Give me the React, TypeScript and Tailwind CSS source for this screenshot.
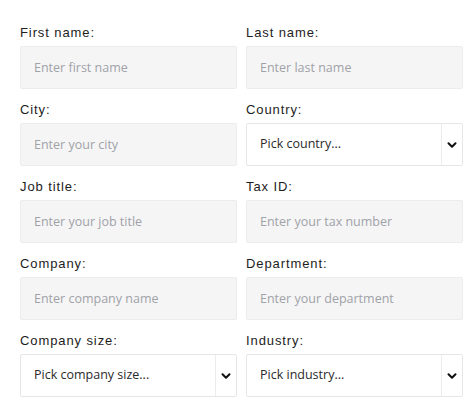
import { ChevronDown } from "lucide-react";

type Field = { label: string; placeholder: string; select?: boolean };

const fields: Field[] = [
  { label: "First name:", placeholder: "Enter first name" },
  { label: "Last name:", placeholder: "Enter last name" },
  { label: "City:", placeholder: "Enter your city" },
  { label: "Country:", placeholder: "Pick country...", select: true },
  { label: "Job title:", placeholder: "Enter your job title" },
  { label: "Tax ID:", placeholder: "Enter your tax number" },
  { label: "Company:", placeholder: "Enter company name" },
  { label: "Department:", placeholder: "Enter your department" },
  { label: "Company size:", placeholder: "Pick company size...", select: true },
  { label: "Industry:", placeholder: "Pick industry...", select: true },
];

function FormField({ field }: { field: Field }) {
  return (
    <div className="flex flex-col">
      <label className="mb-[5px] h-4 font-['Liberation_Sans',Arial,sans-serif] text-[13px] leading-4 tracking-[0.9px] text-[#1d1d1d]">
        {field.label}
      </label>
      {field.select ? (
        <div className="flex h-[43px] items-stretch rounded-[2px] border border-[#e6e6e6] bg-white">
          <span className="flex flex-1 items-center pl-[13px] font-['Open_Sans',sans-serif] text-[12.5px] text-[#2a2a2a]">
            {field.placeholder}
          </span>
          <span className="flex w-[21px] items-center justify-center border-l border-[#ececec]">
            <ChevronDown size={14} strokeWidth={3.5} className="text-[#111]" />
          </span>
        </div>
      ) : (
        <input
          className="h-[43px] rounded-[2px] border border-[#ececec] bg-[#f5f5f6] pl-[13px] font-['Open_Sans',sans-serif] text-[12.5px] text-[#333] placeholder:text-[#a0a2a7] outline-none"
          placeholder={field.placeholder}
        />
      )}
    </div>
  );
}

export default function App() {
  return (
    <div className="min-h-[409px] bg-white pl-5 pt-[25px]">
      <div className="grid w-[443px] grid-cols-[217px_217px] gap-x-[9px] gap-y-[13px]">
        {fields.map((f) => (
          <FormField key={f.label} field={f} />
        ))}
      </div>
    </div>
  );
}
